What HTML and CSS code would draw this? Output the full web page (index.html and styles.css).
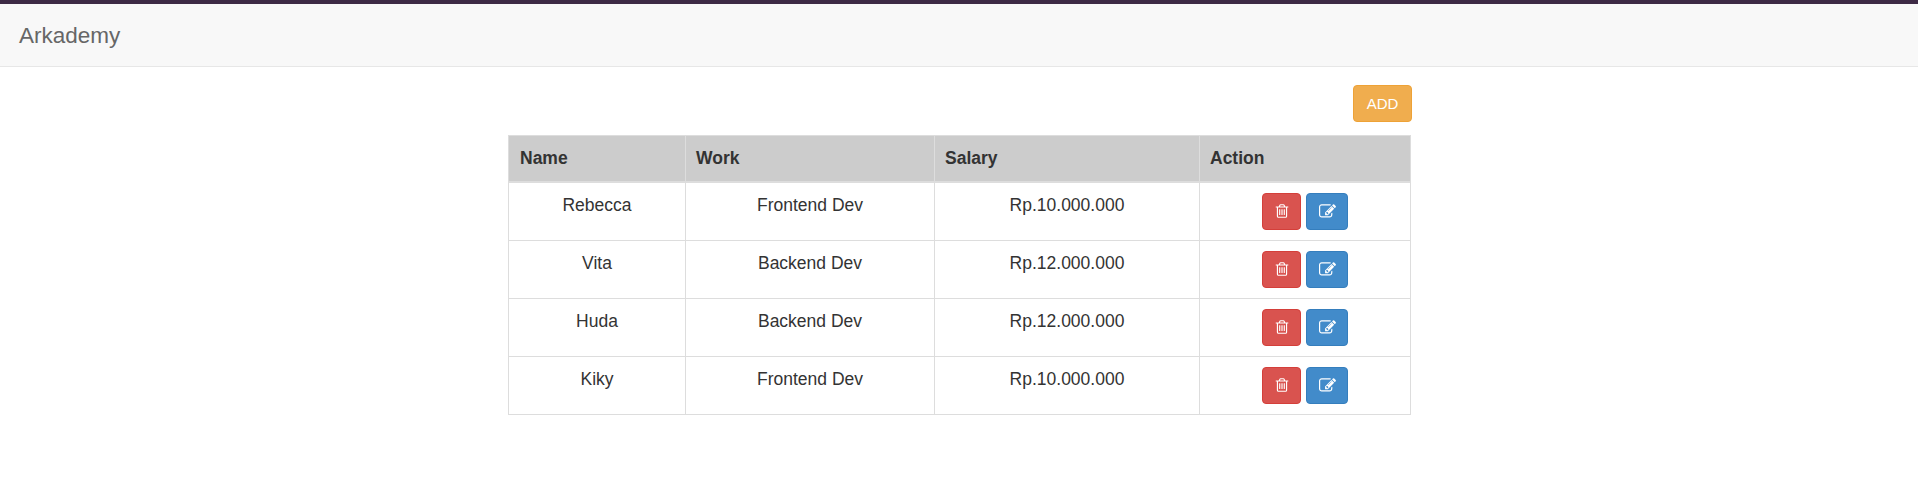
FILE: index.html
```html
<!DOCTYPE html>
<html lang="en">
<head>
    <meta charset="UTF-8">
    <meta name="viewport" content="width=device-width, initial-scale=1.0">
    <link rel="stylesheet" href="styles.css">
    <title>Arkademy</title>
</head>
<body>
    <nav class="navbar">
        <a class="brand" href="#">Arkademy</a>
    </nav>
    <div class="container">
        <div class="toolbar">
            <button class="btn btn-add" type="button">ADD</button>
        </div>
        <table class="tabel">
            <thead>
                <tr>
                    <th class="col-name">Name</th>
                    <th class="col-work">Work</th>
                    <th class="col-salary">Salary</th>
                    <th>Action</th>
                </tr>
            </thead>
            <tbody>
                <tr>
                    <td>Rebecca</td>
                    <td>Frontend Dev</td>
                    <td>Rp.10.000.000</td>
                    <td>
                        <div class="actions">
                            <button class="btn btn-delete" type="button"><svg class="icon" viewBox="0 0 1792 1792"><path d="M704 736v576q0 14-9 23t-23 9h-64q-14 0-23-9t-9-23v-576q0-14 9-23t23-9h64q14 0 23 9t9 23zm256 0v576q0 14-9 23t-23 9h-64q-14 0-23-9t-9-23v-576q0-14 9-23t23-9h64q14 0 23 9t9 23zm256 0v576q0 14-9 23t-23 9h-64q-14 0-23-9t-9-23v-576q0-14 9-23t23-9h64q14 0 23 9t9 23zm128 724v-948h-896v948q0 22 7 40.5t14.5 27 10.5 8.5h832q3 0 10.5-8.5t14.5-27 7-40.5zm-672-1076h448l-48-117q-7-9-17-11h-317q-10 2-17 11zm928 32v64q0 14-9 23t-23 9h-96v948q0 83-47 143.5t-113 60.5h-832q-66 0-113-58.5t-47-141.5v-952h-96q-14 0-23-9t-9-23v-64q0-14 9-23t23-9h309l70-167q15-37 54-63t79-26h320q40 0 79 26t54 63l70 167h309q14 0 23 9t9 23z"/></svg></button>
                            <button class="btn btn-edit" type="button"><svg class="icon icon-edit" viewBox="0 0 1792 1792"><path d="M888 1184l116-116-152-152-116 116v56h96v96h56zm440-720q-16-16-33 1l-350 350q-17 17-1 33t33-1l350-350q17-17 1-33zm80 594v190q0 119-84.5 203.5t-203.5 84.5h-832q-119 0-203.5-84.5t-84.5-203.5v-832q0-119 84.5-203.5t203.5-84.5h832q63 0 117 25 15 7 18 23 3 17-9 29l-49 49q-14 14-32 8-23-6-45-6h-832q-66 0-113 47t-47 113v832q0 66 47 113t113 47h832q66 0 113-47t47-113v-126q0-13 9-22l64-64q15-15 35-7t20 29zm-96-738l288 288-672 672h-288v-288zm444 132l-92 92-288-288 92-92q28-28 68-28t68 28l152 152q28 28 28 68t-28 68z"/></svg></button>
                        </div>
                    </td>
                </tr>
                <tr>
                    <td>Vita</td>
                    <td>Backend Dev</td>
                    <td>Rp.12.000.000</td>
                    <td>
                        <div class="actions">
                            <button class="btn btn-delete" type="button"><svg class="icon" viewBox="0 0 1792 1792"><path d="M704 736v576q0 14-9 23t-23 9h-64q-14 0-23-9t-9-23v-576q0-14 9-23t23-9h64q14 0 23 9t9 23zm256 0v576q0 14-9 23t-23 9h-64q-14 0-23-9t-9-23v-576q0-14 9-23t23-9h64q14 0 23 9t9 23zm256 0v576q0 14-9 23t-23 9h-64q-14 0-23-9t-9-23v-576q0-14 9-23t23-9h64q14 0 23 9t9 23zm128 724v-948h-896v948q0 22 7 40.5t14.5 27 10.5 8.5h832q3 0 10.5-8.5t14.5-27 7-40.5zm-672-1076h448l-48-117q-7-9-17-11h-317q-10 2-17 11zm928 32v64q0 14-9 23t-23 9h-96v948q0 83-47 143.5t-113 60.5h-832q-66 0-113-58.5t-47-141.5v-952h-96q-14 0-23-9t-9-23v-64q0-14 9-23t23-9h309l70-167q15-37 54-63t79-26h320q40 0 79 26t54 63l70 167h309q14 0 23 9t9 23z"/></svg></button>
                            <button class="btn btn-edit" type="button"><svg class="icon icon-edit" viewBox="0 0 1792 1792"><path d="M888 1184l116-116-152-152-116 116v56h96v96h56zm440-720q-16-16-33 1l-350 350q-17 17-1 33t33-1l350-350q17-17 1-33zm80 594v190q0 119-84.5 203.5t-203.5 84.5h-832q-119 0-203.5-84.5t-84.5-203.5v-832q0-119 84.5-203.5t203.5-84.5h832q63 0 117 25 15 7 18 23 3 17-9 29l-49 49q-14 14-32 8-23-6-45-6h-832q-66 0-113 47t-47 113v832q0 66 47 113t113 47h832q66 0 113-47t47-113v-126q0-13 9-22l64-64q15-15 35-7t20 29zm-96-738l288 288-672 672h-288v-288zm444 132l-92 92-288-288 92-92q28-28 68-28t68 28l152 152q28 28 28 68t-28 68z"/></svg></button>
                        </div>
                    </td>
                </tr>
                <tr>
                    <td>Huda</td>
                    <td>Backend Dev</td>
                    <td>Rp.12.000.000</td>
                    <td>
                        <div class="actions">
                            <button class="btn btn-delete" type="button"><svg class="icon" viewBox="0 0 1792 1792"><path d="M704 736v576q0 14-9 23t-23 9h-64q-14 0-23-9t-9-23v-576q0-14 9-23t23-9h64q14 0 23 9t9 23zm256 0v576q0 14-9 23t-23 9h-64q-14 0-23-9t-9-23v-576q0-14 9-23t23-9h64q14 0 23 9t9 23zm256 0v576q0 14-9 23t-23 9h-64q-14 0-23-9t-9-23v-576q0-14 9-23t23-9h64q14 0 23 9t9 23zm128 724v-948h-896v948q0 22 7 40.5t14.5 27 10.5 8.5h832q3 0 10.5-8.5t14.5-27 7-40.5zm-672-1076h448l-48-117q-7-9-17-11h-317q-10 2-17 11zm928 32v64q0 14-9 23t-23 9h-96v948q0 83-47 143.5t-113 60.5h-832q-66 0-113-58.5t-47-141.5v-952h-96q-14 0-23-9t-9-23v-64q0-14 9-23t23-9h309l70-167q15-37 54-63t79-26h320q40 0 79 26t54 63l70 167h309q14 0 23 9t9 23z"/></svg></button>
                            <button class="btn btn-edit" type="button"><svg class="icon icon-edit" viewBox="0 0 1792 1792"><path d="M888 1184l116-116-152-152-116 116v56h96v96h56zm440-720q-16-16-33 1l-350 350q-17 17-1 33t33-1l350-350q17-17 1-33zm80 594v190q0 119-84.5 203.5t-203.5 84.5h-832q-119 0-203.5-84.5t-84.5-203.5v-832q0-119 84.5-203.5t203.5-84.5h832q63 0 117 25 15 7 18 23 3 17-9 29l-49 49q-14 14-32 8-23-6-45-6h-832q-66 0-113 47t-47 113v832q0 66 47 113t113 47h832q66 0 113-47t47-113v-126q0-13 9-22l64-64q15-15 35-7t20 29zm-96-738l288 288-672 672h-288v-288zm444 132l-92 92-288-288 92-92q28-28 68-28t68 28l152 152q28 28 28 68t-28 68z"/></svg></button>
                        </div>
                    </td>
                </tr>
                <tr>
                    <td>Kiky</td>
                    <td>Frontend Dev</td>
                    <td>Rp.10.000.000</td>
                    <td>
                        <div class="actions">
                            <button class="btn btn-delete" type="button"><svg class="icon" viewBox="0 0 1792 1792"><path d="M704 736v576q0 14-9 23t-23 9h-64q-14 0-23-9t-9-23v-576q0-14 9-23t23-9h64q14 0 23 9t9 23zm256 0v576q0 14-9 23t-23 9h-64q-14 0-23-9t-9-23v-576q0-14 9-23t23-9h64q14 0 23 9t9 23zm256 0v576q0 14-9 23t-23 9h-64q-14 0-23-9t-9-23v-576q0-14 9-23t23-9h64q14 0 23 9t9 23zm128 724v-948h-896v948q0 22 7 40.5t14.5 27 10.5 8.5h832q3 0 10.5-8.5t14.5-27 7-40.5zm-672-1076h448l-48-117q-7-9-17-11h-317q-10 2-17 11zm928 32v64q0 14-9 23t-23 9h-96v948q0 83-47 143.5t-113 60.5h-832q-66 0-113-58.5t-47-141.5v-952h-96q-14 0-23-9t-9-23v-64q0-14 9-23t23-9h309l70-167q15-37 54-63t79-26h320q40 0 79 26t54 63l70 167h309q14 0 23 9t9 23z"/></svg></button>
                            <button class="btn btn-edit" type="button"><svg class="icon icon-edit" viewBox="0 0 1792 1792"><path d="M888 1184l116-116-152-152-116 116v56h96v96h56zm440-720q-16-16-33 1l-350 350q-17 17-1 33t33-1l350-350q17-17 1-33zm80 594v190q0 119-84.5 203.5t-203.5 84.5h-832q-119 0-203.5-84.5t-84.5-203.5v-832q0-119 84.5-203.5t203.5-84.5h832q63 0 117 25 15 7 18 23 3 17-9 29l-49 49q-14 14-32 8-23-6-45-6h-832q-66 0-113 47t-47 113v832q0 66 47 113t113 47h832q66 0 113-47t47-113v-126q0-13 9-22l64-64q15-15 35-7t20 29zm-96-738l288 288-672 672h-288v-288zm444 132l-92 92-288-288 92-92q28-28 68-28t68 28l152 152q28 28 28 68t-28 68z"/></svg></button>
                        </div>
                    </td>
                </tr>
            </tbody>
        </table>
    </div>
</body>
</html>
```

FILE: styles.css
```css
* {
    box-sizing: border-box;
}
body {
    margin: 0;
    background: #fff;
    color: #333;
    font-family: "Liberation Sans", Arial, sans-serif;
    font-size: 17.5px;
    line-height: 25px;
}
.navbar {
    height: 67px;
    display: flex;
    align-items: center;
    padding-left: 19px;
    background: #f8f8f8;
    border-top: 4px solid #3d2a45;
    border-bottom: 1px solid #e7e7e7;
}
.brand {
    font-size: 22.5px;
    color: #666;
    text-decoration: none;
}
.container {
    width: 904px;
    margin: 18px 0 0 508px;
}
.toolbar {
    display: flex;
    justify-content: flex-end;
    margin-bottom: 13px;
}
.btn {
    height: 37px;
    display: flex;
    align-items: center;
    justify-content: center;
    padding: 0;
    border: 1px solid transparent;
    border-radius: 4px;
    color: #fff;
    font-family: inherit;
    font-size: 15px;
}
.btn-add {
    width: 59px;
    background: #f0ad4e;
    border-color: #eea236;
}
.btn-delete {
    width: 39px;
    background: #d9534f;
    border-color: #d43f3a;
}
.btn-edit {
    width: 42px;
    background: #428bca;
    border-color: #357ebd;
}
.icon {
    width: 16px;
    height: 16px;
    fill: #fff;
}
.icon-edit {
    width: 17px;
    height: 17px;
}
.tabel {
    width: 903px;
    border-collapse: collapse;
    table-layout: fixed;
}
.tabel th,
.tabel td {
    border: 1px solid #ddd;
    padding: 10px;
    vertical-align: top;
}
.tabel th {
    height: 46px;
    padding: 10px 10px 8px;
    background: #ccc;
    text-align: left;
    border-bottom-width: 2px;
}
.tabel td {
    height: 58px;
    text-align: center;
}
.tabel .col-name {
    width: 177px;
    padding-left: 11px;
}
.col-work {
    width: 249px;
}
.col-salary {
    width: 265px;
}
.actions {
    display: flex;
    justify-content: center;
    gap: 5px;
}
```
